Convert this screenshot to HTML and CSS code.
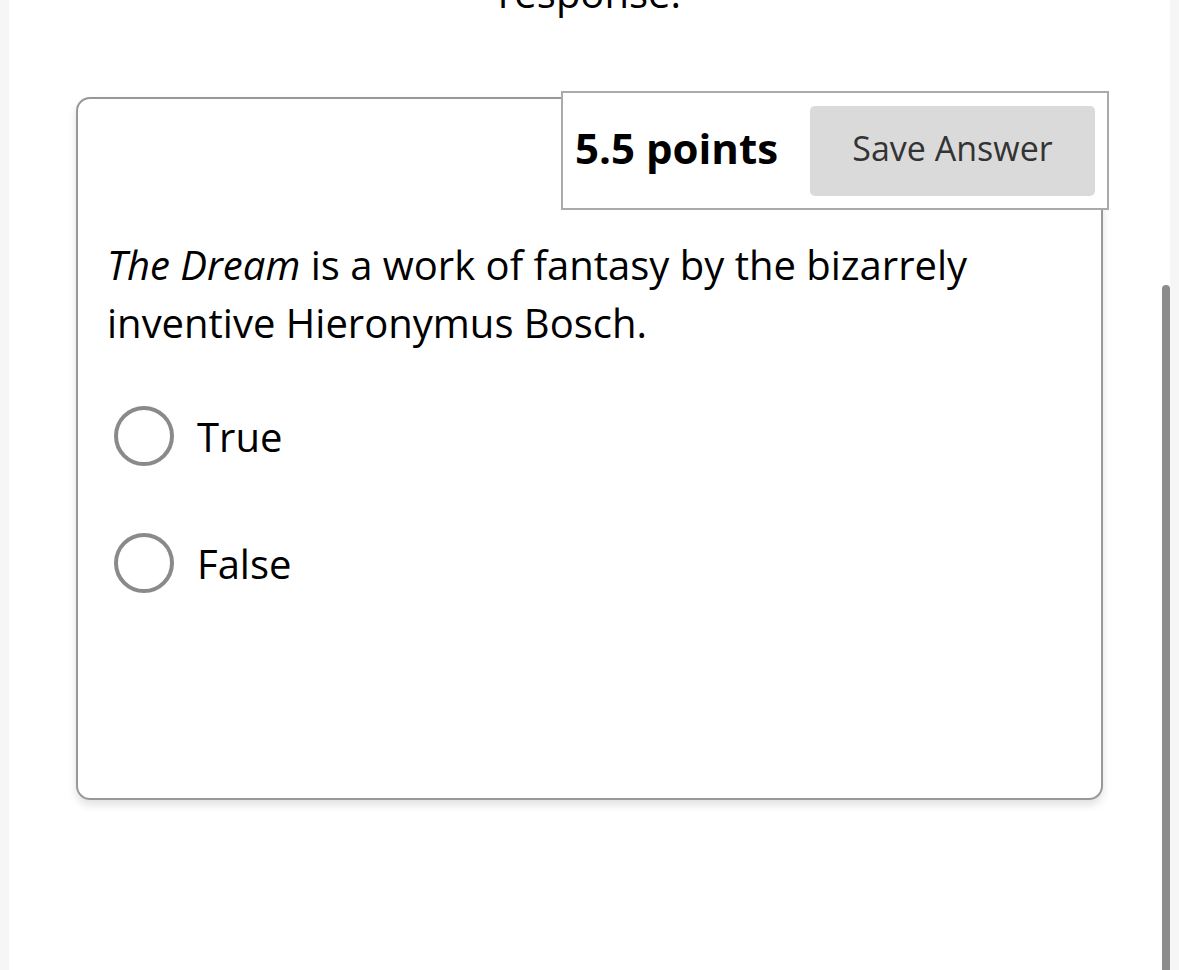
FILE: index.html
```html
<!DOCTYPE html>
<html lang="en">
<head>
    <meta charset="UTF-8">
    <meta name="viewport" content="width=device-width, initial-scale=1.0">
    <title>Question</title>
    <link rel="stylesheet" href="styles.css">
</head>
<body>
    <div class="page">
        <p class="intro">response.</p>

        <!-- Question card -->
        <div class="question-card">
            <div class="question-head">
                <span class="points">5.5 points</span>
                <button type="button" class="save-btn">Save Answer</button>
            </div>

            <p class="question-text"><em>The Dream</em> is a work of fantasy by the bizarrely inventive Hieronymus Bosch.</p>

            <ul class="answers">
                <li class="answer">
                    <span class="radio"></span>
                    <span class="answer-label">True</span>
                </li>
                <li class="answer">
                    <span class="radio"></span>
                    <span class="answer-label">False</span>
                </li>
            </ul>
        </div>

        <div class="scroll-thumb"></div>
    </div>
</body>
</html>
```

FILE: styles.css
```css
* {
    box-sizing: border-box;
    margin: 0;
    padding: 0;
}

html, body {
    height: 100%;
    overflow: hidden;
}

body {
    font-family: 'Open Sans', 'Noto Sans', sans-serif;
    background: #f6f6f6;
    color: #000;
}

.page {
    position: relative;
    display: flow-root;
    margin: 0 9px;
    height: 100%;
    background: #fff;
    padding-left: 67px;
    padding-right: 67px;
}

.intro {
    font-size: 40px;
    line-height: 58px;
    text-align: center;
    margin: -36px -67px 0;
}

.question-card {
    position: relative;
    margin-top: 75px;
    height: 703px;
    border: 2px solid #989898;
    border-radius: 14px;
    padding: 137px 29px 0;
    box-shadow: 0 5px 8px rgba(0,0,0,0.12);
}

.question-head {
    position: absolute;
    top: -8px;
    right: -8px;
    width: 548px;
    height: 119px;
    display: flex;
    align-items: center;
    justify-content: space-between;
    padding: 0 12px;
    background: #fff;
    border: 2px solid #aaa;
}

.points {
    font-size: 42px;
    font-weight: 700;
    padding-bottom: 6px;
}

.save-btn {
    width: 285px;
    height: 90px;
    border: none;
    border-radius: 5px;
    background: #dadada;
    color: #333;
    font-family: inherit;
    font-size: 34px;
    padding-bottom: 6px;
}

.question-text {
    font-size: 40px;
    line-height: 58px;
}

.answers {
    list-style: none;
    margin-top: 54px;
    display: flex;
    flex-direction: column;
    gap: 67px;
}

.answer {
    display: flex;
    align-items: center;
    gap: 23px;
    padding-left: 7px;
    font-size: 40px;
}

.radio {
    width: 60px;
    height: 60px;
    border: 4px solid #8a8a8a;
    border-radius: 50%;
}

.scroll-thumb {
    position: absolute;
    top: 285px;
    right: 0;
    width: 8px;
    height: 700px;
    border-radius: 4px;
    background: #8c8c8c;
}
```
